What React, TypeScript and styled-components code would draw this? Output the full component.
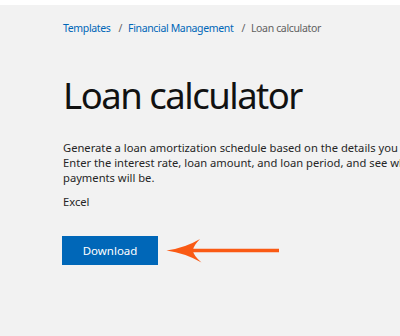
import React from 'react';
import styled, { createGlobalStyle } from 'styled-components';

const GlobalStyle = createGlobalStyle`
  html, body {
    margin: 0;
    padding: 0;
    background: #ffffff;
    overflow: hidden;
  }
  body {
    font-family: "Noto Sans", "Open Sans", sans-serif;
    color: #171717;
  }
`;

const Page = styled.main`
  margin-top: 5px;
  min-height: 331px;
  background: #f2f2f2;
  padding: 16px 0 0 63px;
  box-sizing: border-box;
  width: 700px;
`;

const Breadcrumb = styled.nav`
  display: flex;
  align-items: center;
  font-size: 10.5px;
  line-height: 14px;
  letter-spacing: -0.35px;
`;

const Crumb = styled.a<{ $current?: boolean }>`
  color: ${(p) => (p.$current ? '#616161' : '#0067b8')};
  text-decoration: none;
`;

const Sep = styled.span`
  color: #616161;
  margin: 0 6px 0 8px;
`;

const Title = styled.h1`
  margin: 38px 0 0;
  font-size: 36.5px;
  line-height: 44px;
  font-weight: 400;
  letter-spacing: -1.5px;
  color: #111;
`;

const Lead = styled.p`
  margin: 23px 0 0;
  font-size: 11.2px;
  line-height: 15px;
  color: #262626;
`;

const Kind = styled.p`
  margin: 9px 0 0;
  font-size: 11.2px;
  line-height: 15px;
  color: #262626;
`;

const Actions = styled.div`
  display: flex;
  align-items: center;
  gap: 8px;
  margin: 27px 0 0 -1px;
`;

const DownloadButton = styled.button`
  width: 96px;
  height: 29px;
  padding: 0;
  border: none;
  background: #0067b8;
  color: #fff;
  font-family: inherit;
  font-size: 11.5px;
  cursor: pointer;
`;

const Arrow = () => (
  <svg width="114" height="26" viewBox="0 0 114 26">
    <path d="M27 12.5 H113" stroke="#fa5a14" strokeWidth="3.5" />
    <path
      d="M0.5 12.5 Q19 10 34 1 Q27 8 27 12.5 Q27 17 35.5 24.5 Q19 15 0.5 12.5 Z"
      fill="#fa5a14"
    />
  </svg>
);

export default function App() {
  return (
    <>
      <GlobalStyle />
      <Page>
        <Breadcrumb>
          <Crumb href="#">Templates</Crumb>
          <Sep>/</Sep>
          <Crumb href="#">Financial Management</Crumb>
          <Sep>/</Sep>
          <Crumb $current>Loan calculator</Crumb>
        </Breadcrumb>
        <Title>Loan calculator</Title>
        <Lead>
          Generate a loan amortization schedule based on the details you provide.
          <br />
          Enter the interest rate, loan amount, and loan period, and see what your
          <br />
          payments will be.
        </Lead>
        <Kind>Excel</Kind>
        <Actions>
          <DownloadButton>Download</DownloadButton>
          <Arrow />
        </Actions>
      </Page>
    </>
  );
}
